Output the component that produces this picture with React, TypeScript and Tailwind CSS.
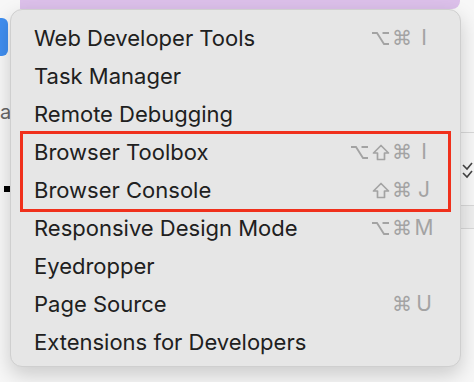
import React from "react";

type Item = { label: string; mods?: string[]; key?: string };

const items: Item[] = [
  { label: "Web Developer Tools", mods: ["opt", "cmd"], key: "I" },
  { label: "Task Manager" },
  { label: "Remote Debugging" },
  { label: "Browser Toolbox", mods: ["opt", "shift", "cmd"], key: "I" },
  { label: "Browser Console", mods: ["shift", "cmd"], key: "J" },
  { label: "Responsive Design Mode", mods: ["opt", "cmd"], key: "M" },
  { label: "Eyedropper" },
  { label: "Page Source", mods: ["cmd"], key: "U" },
  { label: "Extensions for Developers" },
];

function Mod({ name }: { name: string }) {
  if (name === "shift") {
    return (
      <span className="w-[21px] flex justify-center">
        <svg width="18" height="17" viewBox="0 0 18 17">
          <path
            d="M9 1.5 L16.5 9 H12.5 V15.5 H5.5 V9 H1.5 Z"
            fill="none"
            stroke="#a3a3a3"
            strokeWidth="1.7"
            strokeLinejoin="round"
          />
        </svg>
      </span>
    );
  }
  if (name === "opt") {
    return (
      <span className="w-[21px] flex justify-center">
        <svg width="19" height="15" viewBox="0 0 19 15">
          <path
            d="M1 2 H6 L13 13 H18 M11.5 2 H18"
            fill="none"
            stroke="#a3a3a3"
            strokeWidth="1.8"
          />
        </svg>
      </span>
    );
  }
  return (
    <span className="w-[22px] text-center text-[20px] font-['DejaVu_Sans',sans-serif]">⌘</span>
  );
}

function Row({ item }: { item: Item }) {
  return (
    <div className="flex items-center h-[38px] pl-[23px] pr-[25px]">
      <span className="flex-1 text-[22px] text-[#202020]">{item.label}</span>
      {item.key && (
        <span className="flex items-center text-[#a3a3a3] text-[21px]">
          {item.mods?.map((m, i) => <Mod key={i} name={m} />)}
          <span className="w-[22px] text-center">{item.key}</span>
        </span>
      )}
    </div>
  );
}

export default function App() {
  return (
    <div className="relative w-[474px] h-[382px] overflow-hidden bg-[#f7f7f7] font-['Inter',sans-serif]">
      {/* window behind the menu */}
      <div className="absolute left-[20px] top-0 w-[440px] h-[9px] bg-[#dcc0ea] rounded-br-[8px]" />
      <div className="absolute left-0 top-[18px] w-[8px] h-[38px] bg-[#3f8ef0] rounded-r-[6px]" />
      <span className="absolute left-0 top-[98px] text-[20px] leading-[28px] text-[#666]">a</span>
      <div className="absolute left-[4px] top-[186px] w-[6px] h-[6px] bg-black" />
      <div className="absolute right-0 top-[132px] w-[20px] border-t border-[#d8d8d8]" />
      <div className="absolute right-0 top-[205px] w-[20px] h-[24px] bg-[#efefef] border-y border-[#d8d8d8]" />
      <svg className="absolute left-[461px] top-[160px]" width="13" height="22" viewBox="0 0 13 22">
        <path d="M2 5 L6 9 L11 3 M2 13 L6 17 L11 11" fill="none" stroke="#444" strokeWidth="1.6" />
      </svg>

      {/* menu */}
      <div className="absolute left-[10px] top-[9px] w-[451px] h-[358px] rounded-[12px] bg-[#e6e6e6] border border-[#cfcfcf] shadow-[0_8px_20px_rgba(0,0,0,0.18)] pt-[9px]">
        <Row item={items[0]} />
        <Row item={items[1]} />
        <Row item={items[2]} />
        <div className="mx-[9px] border-[3px] border-[#f0301c] -my-[2.5px]">
          <div className="-mx-[12px] -my-[0.5px]">
            <Row item={items[3]} />
            <Row item={items[4]} />
          </div>
        </div>
        {items.slice(5).map((item, i) => (
          <Row key={i} item={item} />
        ))}
      </div>
    </div>
  );
}
